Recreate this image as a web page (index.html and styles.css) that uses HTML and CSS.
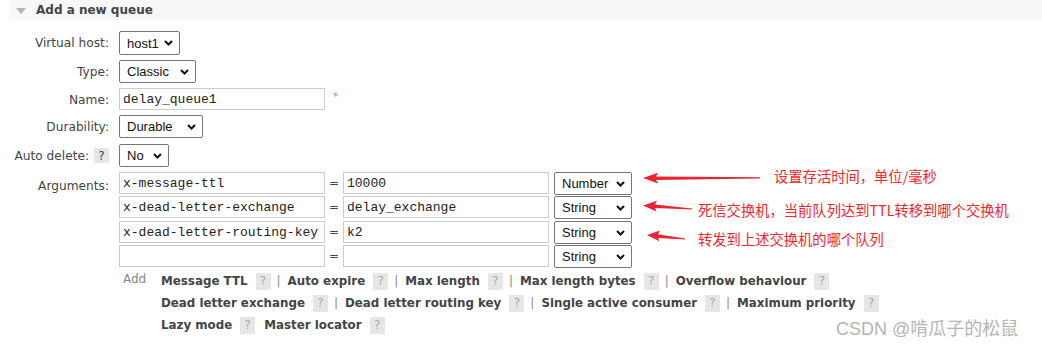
FILE: index.html
```html
<!DOCTYPE html>
<html>
<head>
<meta charset="utf-8">
<link rel="stylesheet" href="styles.css">
</head>
<body>
<div class="page">
  <div class="section-head">
    <svg class="tri" width="10" height="6" viewBox="0 0 10 6"><polygon points="0,0 10,0 5,6" fill="#b4b4b4"/></svg>
    <span class="title">Add a new queue</span>
  </div>

  <div class="form">
    <div class="row r1">
      <div class="label">Virtual host:</div>
      <div class="field"><div class="select w-host"><span>host1</span><svg class="chev" width="9" height="6" viewBox="0 0 9 6"><polyline points="1,1 4.5,4.5 8,1" fill="none" stroke="#111" stroke-width="2"/></svg></div></div>
    </div>
    <div class="row r2">
      <div class="label">Type:</div>
      <div class="field"><div class="select w-type"><span>Classic</span><svg class="chev" width="9" height="6" viewBox="0 0 9 6"><polyline points="1,1 4.5,4.5 8,1" fill="none" stroke="#111" stroke-width="2"/></svg></div></div>
    </div>
    <div class="row r3">
      <div class="label">Name:</div>
      <div class="field"><div class="input w-key">delay_queue1</div><span class="req">*</span></div>
    </div>
    <div class="row r4">
      <div class="label">Durability:</div>
      <div class="field"><div class="select w-dur"><span>Durable</span><svg class="chev" width="9" height="6" viewBox="0 0 9 6"><polyline points="1,1 4.5,4.5 8,1" fill="none" stroke="#111" stroke-width="2"/></svg></div></div>
    </div>
    <div class="row r5">
      <div class="label">Auto delete: <span class="help dark">?</span></div>
      <div class="field"><div class="select w-no"><span>No</span><svg class="chev" width="9" height="6" viewBox="0 0 9 6"><polyline points="1,1 4.5,4.5 8,1" fill="none" stroke="#111" stroke-width="2"/></svg></div></div>
    </div>
    <div class="row args">
      <div class="label top">Arguments:</div>
      <div class="arg-list">
        <div class="arg h24">
          <div class="input w-key">x-message-ttl</div><span class="eq">=</span><div class="input w-val">10000</div>
          <div class="select w-typ"><span>Number</span><svg class="chev" width="9" height="6" viewBox="0 0 9 6"><polyline points="1,1 4.5,4.5 8,1" fill="none" stroke="#111" stroke-width="2"/></svg></div>
        </div>
        <div class="arg h25">
          <div class="input w-key">x-dead-letter-exchange</div><span class="eq">=</span><div class="input w-val">delay_exchange</div>
          <div class="select w-typ"><span>String</span><svg class="chev" width="9" height="6" viewBox="0 0 9 6"><polyline points="1,1 4.5,4.5 8,1" fill="none" stroke="#111" stroke-width="2"/></svg></div>
        </div>
        <div class="arg h24">
          <div class="input w-key">x-dead-letter-routing-key</div><span class="eq">=</span><div class="input w-val">k2</div>
          <div class="select w-typ"><span>String</span><svg class="chev" width="9" height="6" viewBox="0 0 9 6"><polyline points="1,1 4.5,4.5 8,1" fill="none" stroke="#111" stroke-width="2"/></svg></div>
        </div>
        <div class="arg h25">
          <div class="input w-key"></div><span class="eq">=</span><div class="input w-val"></div>
          <div class="select w-typ"><span>String</span><svg class="chev" width="9" height="6" viewBox="0 0 9 6"><polyline points="1,1 4.5,4.5 8,1" fill="none" stroke="#111" stroke-width="2"/></svg></div>
        </div>
      </div>
    </div>
  </div>

  <div class="add-block">
    <div class="add-label">Add</div>
    <div class="links">
      <div class="link-row">
        <span class="lk">Message TTL</span><span class="help">?</span><span class="sep">|</span>
        <span class="lk">Auto expire</span><span class="help">?</span><span class="sep">|</span>
        <span class="lk">Max length</span><span class="help">?</span><span class="sep">|</span>
        <span class="lk">Max length bytes</span><span class="help">?</span><span class="sep">|</span>
        <span class="lk">Overflow behaviour</span><span class="help">?</span>
      </div>
      <div class="link-row">
        <span class="lk">Dead letter exchange</span><span class="help">?</span><span class="sep">|</span>
        <span class="lk">Dead letter routing key</span><span class="help">?</span><span class="sep">|</span>
        <span class="lk">Single active consumer</span><span class="help">?</span><span class="sep">|</span>
        <span class="lk">Maximum priority</span><span class="help">?</span>
      </div>
      <div class="link-row">
        <span class="lk">Lazy mode</span><span class="help">?</span><span class="gap"></span>
        <span class="lk">Master locator</span><span class="help">?</span>
      </div>
    </div>
  </div>

  <svg class="arrows" width="1042" height="347" viewBox="0 0 1042 347">
    <g fill="#ea2430">
      <polygon points="643,178 658,172.8 656,176.6 760,177.3 760,178.5 656,180 658,183.4"/>
      <polygon points="643,205.5 657,200.8 655,204.6 692,208.4 692,209.6 655,208 656.5,211.5"/>
      <polygon points="647,235 660,230.6 658,234.3 685,238.4 685,239.6 658,238 659.5,241.2"/>
    </g>
  </svg>
  <div class="note n1">设置存活时间，单位/毫秒</div>
  <div class="note n2">死信交换机，当前队列达到TTL转移到哪个交换机</div>
  <div class="note n3">转发到上述交换机的哪个队列</div>

  <div class="watermark">CSDN @啃瓜子的松鼠</div>
</div>
</body>
</html>
```
FILE: styles.css
```css
* { box-sizing: border-box; }
html, body { margin: 0; padding: 0; background: #fff; }
.page {
  position: relative;
  width: 1042px;
  height: 347px;
  overflow: hidden;
  font-family: "DejaVu Sans", Verdana, sans-serif;
  font-size: 12px;
  color: #444;
}
.section-head {
  margin-left: 10px;
  height: 20px;
  background: #f8f8f8;
  display: flex;
  align-items: center;
  padding-left: 6px;
}
.tri { margin-right: 10px; margin-top: 1px; }
.title { font-weight: bold; font-size: 12px; color: #444; }

.form { padding-top: 11px; }
.row { display: flex; align-items: flex-start; }
.r1 { height: 29px; }
.r2 { height: 28px; }
.r3 { height: 27px; }
.r4 { height: 29px; }
.r5 { height: 28px; }
.label {
  width: 109px;
  display: flex;
  justify-content: flex-end;
  align-items: center;
  height: 23px;
  white-space: pre;
  font-size: 12.2px;
}
.label.top { padding-top: 4px; }
.field { margin-left: 10px; display: flex; align-items: flex-start; }

.select {
  height: 23px;
  border: 1px solid #767676;
  border-radius: 2px;
  background: #fff;
  display: flex;
  align-items: center;
  justify-content: space-between;
  padding: 0 6px 0 7px;
  font-family: "Liberation Sans", Arial, sans-serif;
  font-size: 13px;
  color: #111;
}
.r1 .select { height: 24px; }
.chev { flex: none; }
.w-host { width: 61px; }
.w-type { width: 77px; }
.w-dur { width: 84px; }
.w-no { width: 50px; }
.w-typ { width: 78px; margin-left: 5px; }

.input {
  height: 22px;
  border: 1px solid #cccccc;
  background: #fff;
  padding: 0 3px;
  display: flex;
  align-items: center;
  font-family: "Liberation Mono", "Courier New", monospace;
  font-size: 13px;
  color: #222;
  white-space: pre;
}
.w-key { width: 206px; }
.w-val { width: 206px; }
.req { color: #f08080; font-size: 11px; margin-left: 8px; margin-top: 2px; }

.help {
  display: inline-flex;
  align-items: center;
  justify-content: center;
  width: 15px;
  height: 17px;
  background: #e6e6e6;
  color: #aaa;
  font-weight: normal;
  font-size: 12px;
}
.help.dark { color: #444; height: 15px; margin-left: 1px; }

.arg-list { margin-left: 10px; }
.arg { display: flex; align-items: flex-start; }
.h24 { height: 24px; }
.h25 { height: 25px; }
.eq { width: 18px; text-align: center; line-height: 22px; color: #444; }

.add-block { display: flex; padding-left: 123px; margin-top: 0; }
.add-label { width: 38px; color: #888; line-height: 18px; }
.links { display: flex; flex-direction: column; }
.link-row { display: flex; align-items: center; height: 22px; white-space: pre; }
.lk { font-weight: bold; color: #444; margin-right: 8px; font-size: 11.85px; }
.sep { color: #888; margin: 0 7px 0 6px; }
.gap { width: 9px; }

.arrows { position: absolute; left: 0; top: 0; pointer-events: none; }
.note {
  position: absolute;
  font-family: "Noto Sans CJK SC", "Microsoft YaHei", sans-serif;
  font-size: 14.3px;
  line-height: 18px;
  color: #f0262e;
  white-space: nowrap;
}
.n1 { left: 774px; top: 167px; }
.n2 { left: 698px; top: 201px; }
.n3 { left: 698px; top: 230px; }

.watermark {
  position: absolute;
  left: 836px;
  top: 317px;
  font-family: "Liberation Sans", "Noto Sans CJK SC", sans-serif;
  font-size: 18px;
  line-height: 24px;
  color: #b4b4b4;
  white-space: nowrap;
}
```
